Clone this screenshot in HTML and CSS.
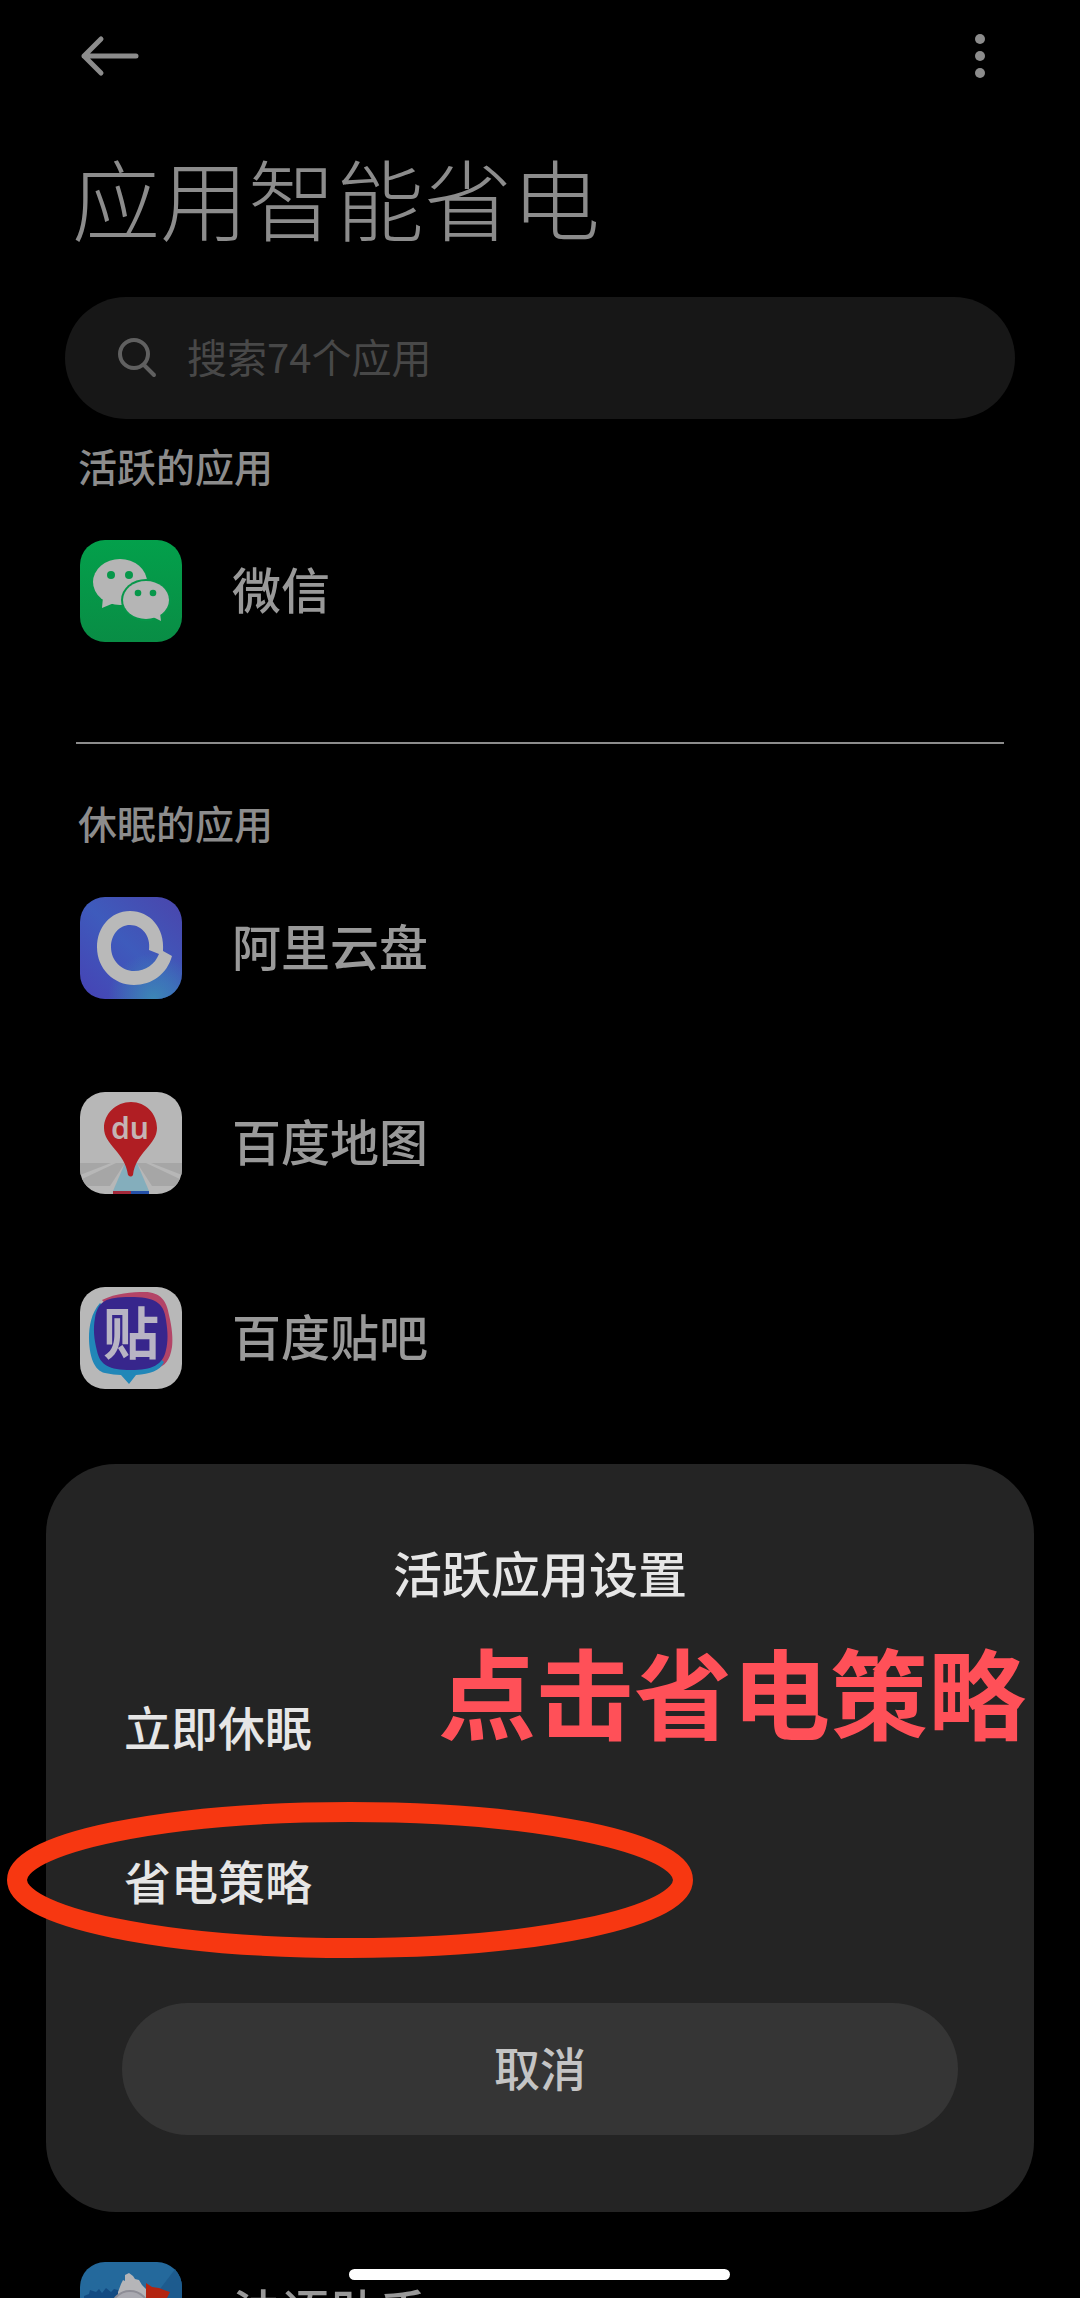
FILE: index.html
```
<!DOCTYPE html>
<html lang="zh-CN">

<head>
    <meta charset="UTF-8">
    <meta name="viewport" content="width=device-width, initial-scale=1.0">
    <title>应用智能省电</title>
    <link rel="stylesheet" href="styles.css">
</head>

<body>

    <header class="topbar">
        <button class="icon-button" aria-label="返回">
            <svg width="60" height="44" viewBox="0 0 60 44" fill="none" stroke="#8c8c8c" stroke-width="5" stroke-linecap="round" stroke-linejoin="round">
                <path d="M22 5L5 22l17 17M5 22h52" />
            </svg>
        </button>
        <button class="icon-button" aria-label="更多">
            <svg width="12" height="44" viewBox="0 0 12 44" fill="#8c8c8c">
                <circle cx="6" cy="5" r="5" />
                <circle cx="6" cy="22" r="5" />
                <circle cx="6" cy="39" r="5" />
            </svg>
        </button>
    </header>

    <main>
        <h1>应用智能省电</h1>

        <label class="search">
            <svg width="42" height="42" viewBox="0 0 42 42" fill="none" stroke="#606060" stroke-width="4" stroke-linecap="round">
                <circle cx="17" cy="17" r="14" />
                <path d="M27 28l10 10" />
            </svg>
            <input type="text" placeholder="搜索74个应用" aria-label="搜索应用">
        </label>

        <section>
            <h2>活跃的应用</h2>
            <ul class="app-list">
                <li class="app">
                    <svg class="app-icon" viewBox="0 0 102 102">
                        <defs>
                            <linearGradient id="wechat" x1="0" y1="0" x2="0" y2="1">
                                <stop offset="0" stop-color="#03a04b" />
                                <stop offset="1" stop-color="#098d45" />
                            </linearGradient>
                        </defs>
                        <rect width="102" height="102" rx="25" fill="url(#wechat)" />
                        <g fill="#b5b5b5">
                            <ellipse cx="40" cy="42" rx="27" ry="23" />
                            <path d="M23 57l-1 11 12-5z" />
                        </g>
                        <ellipse cx="66" cy="60" rx="25" ry="21" fill="#07974a" />
                        <g fill="#b5b5b5">
                            <ellipse cx="66" cy="60" rx="23" ry="19" />
                            <path d="M73 77l8 4-1-8z" />
                        </g>
                        <g fill="#07974a">
                            <circle cx="31" cy="35" r="4" />
                            <circle cx="49" cy="35" r="4" />
                            <circle cx="58" cy="53" r="3.3" />
                            <circle cx="73" cy="53" r="3.3" />
                        </g>
                    </svg>
                    <span>微信</span>
                </li>
            </ul>
        </section>

        <hr>

        <section>
            <h2>休眠的应用</h2>
            <ul class="app-list">
                <li class="app">
                    <svg class="app-icon" viewBox="0 0 102 102">
                        <defs>
                            <linearGradient id="drive" x1="0" y1="1" x2="1" y2="0">
                                <stop offset="0" stop-color="#4642b4" />
                                <stop offset=".5" stop-color="#3e5bbc" />
                                <stop offset="1" stop-color="#4a45ac" />
                            </linearGradient>
                            <radialGradient id="drive-glow" cx=".72" cy="1" r=".45">
                                <stop offset="0" stop-color="#3c87b6" />
                                <stop offset="1" stop-color="#3c87b6" stop-opacity="0" />
                            </radialGradient>
                        </defs>
                        <rect width="102" height="102" rx="25" fill="url(#drive)" />
                        <rect width="102" height="102" rx="25" fill="url(#drive-glow)" />
                        <path fill="#b9b9b9" fill-rule="evenodd" d="M83 54C85 31 70 14 50 14C30 14 17 31 17 50C17 72 34 88 54 88C72 88 87 77 92 59ZM69 53C71 39 62 28 50 28C39 28 31 38 31 50C31 64 42 74 54 74C66 74 75 67 79 57Z" />
                    </svg>
                    <span>阿里云盘</span>
                </li>
                <li class="app">
                    <svg class="app-icon" viewBox="0 0 102 102">
                        <defs>
                            <clipPath id="tile">
                                <rect width="102" height="102" rx="25" />
                            </clipPath>
                        </defs>
                        <g clip-path="url(#tile)">
                            <rect width="102" height="102" fill="#b7b7b7" />
                            <path fill="#a6a6a6" d="M0 71h31L0 83zM36 71h9L30 94H0v-6zM71 71h31v12zM57 71h9l36 17v6H72z" />
                            <path fill="#84aebc" d="M45 71h12l12 28H33z" />
                            <path fill="#a3283a" d="M33 99h18v3H33z" />
                            <path fill="#2450a8" d="M51 99h18v3H51z" />
                            <path fill="#b01e23" d="M51 10C66 10 77 22 77 36C77 53 56 60 53 83Q51 86 48 83C45 60 24 53 24 36C24 22 36 10 51 10Z" />
                        </g>
                        <text class="du" x="50" y="47">du</text>
                    </svg>
                    <span>百度地图</span>
                </li>
                <li class="app">
                    <svg class="app-icon" viewBox="0 0 102 102">
                        <rect width="102" height="102" rx="25" fill="#b8b8b8" />
                        <path fill="#b34467" d="M22 13C36 6 52 5 65 5C80 5 87 14 89 28C92 40 93 52 92 60C90 74 84 79 78 81Z" />
                        <path fill="#2187b8" d="M20 16C11 26 9 40 9 51C9 68 14 84 25 86Q34 88 41 88L49 97L56 88C70 87 80 84 84 75Z" />
                        <path fill="#37268c" d="M50 10C74 10 84 15 86 33C88 46 88 54 86 63C83 78 72 83 51 83C29 83 20 78 17 64C14 52 13 42 15 31C18 14 26 10 50 10Z" />
                        <text class="tie" x="51" y="67">贴</text>
                    </svg>
                    <span>百度贴吧</span>
                </li>
                <li class="app app-last">
                    <svg class="app-icon" viewBox="0 0 102 102">
                        <g clip-path="url(#tile)">
                            <rect width="102" height="102" fill="#24699c" />
                            <path fill="#1d5b8e" d="M96 6L70 40v62h32V6z" />
                            <path fill="#124a82" d="M4 34l5-2 1-4 6 2 3-3 3 4 4-5 5 4 3-3 8 2v73H4z" />
                            <path fill="#b5b5b8" d="M38 102V30l3-8 2-4 2 1v-6l4-2 4 3 2 3 4 1 3 5 4 4v75z" />
                            <path fill="#b32410" d="M66 21l6 4 7 1 5 2 6 2-4 8-4 4-16 2z" />
                            <circle cx="50" cy="48" r="19" fill="#a9a9b0" stroke="#8d8d96" stroke-width="2" />
                        </g>
                    </svg>
                    <span>法语助手</span>
                </li>
            </ul>
        </section>
    </main>

    <div class="sheet" role="dialog" aria-labelledby="sheet-title">
        <h3 id="sheet-title">活跃应用设置</h3>
        <button class="option">立即休眠</button>
        <button class="option">省电策略
            <svg class="ring" viewBox="0 0 686 156" preserveAspectRatio="none">
                <ellipse cx="343" cy="78" rx="333" ry="68" fill="none" stroke="#f73711" stroke-width="20" />
            </svg>
        </button>
        <button class="cancel">取消</button>
        <strong class="note">点击省电策略</strong>
    </div>

    <div class="home-bar"></div>

</body>

</html>
```

FILE: styles.css
```
* {
    box-sizing: border-box;
}

body {
    font-family: "Noto Sans CJK SC", sans-serif;
    background-color: #000;
    color: #999;
    margin: 0;
    height: 100vh;
    overflow: hidden;
}

h1, h2, h3, ul {
    margin: 0;
    padding: 0;
}

button {
    font-family: inherit;
    border: none;
    padding: 0;
    background: none;
    cursor: pointer;
}

.topbar {
    display: flex;
    justify-content: space-between;
    align-items: center;
    height: 112px;
    padding: 0 94px 0 79px;
}

.icon-button {
    display: flex;
}

main {
    padding: 0 76px;
}

h1 {
    margin: 24px -4px 0;
    font-size: 88px;
    line-height: 120px;
    font-weight: 300;
    color: #8c8c8c;
}

.search {
    display: flex;
    align-items: center;
    gap: 28px;
    height: 122px;
    margin: 41px -11px 0;
    padding: 0 52px;
    border-radius: 61px;
    background-color: #171717;
}

.search input {
    flex: 1;
    min-width: 0;
    border: none;
    outline: none;
    padding: 0 0 4px;
    background: none;
    color: #999;
    font-family: inherit;
    font-size: 40px;
}

.search input::placeholder {
    color: #484848;
}

h2 {
    margin-top: 18px;
    padding-left: 2px;
    font-size: 39px;
    line-height: 56px;
    font-weight: 500;
    color: #8c8c8c;
}

.app-list {
    list-style: none;
}

.app {
    display: flex;
    align-items: center;
    gap: 50px;
    height: 195px;
    padding-left: 4px;
    font-size: 49px;
    font-weight: 500;
}

.app span {
    padding-bottom: 6px;
}

.app-icon {
    width: 102px;
    height: 102px;
    flex-shrink: 0;
}

/* the rows in between are covered by the sheet */
.app-last {
    margin-top: 780px;
}

hr {
    height: 2px;
    margin: 54px 0 50px;
    border: none;
    background-color: #8c8c8c;
}

hr + section h2 {
    margin-top: 0;
}

.du {
    font: 600 30px "Noto Sans", sans-serif;
    fill: #c4b4b4;
    text-anchor: middle;
}

.tie {
    font-size: 56px;
    font-weight: 700;
    fill: #b8b4c4;
    text-anchor: middle;
}

.sheet {
    position: fixed;
    left: 46px;
    right: 46px;
    bottom: 86px;
    display: flex;
    flex-direction: column;
    padding: 72px 76px 77px;
    border-radius: 70px;
    background-color: #242424;
    color: #e6e6e6;
}

h3 {
    margin-bottom: 40px;
    font-size: 49px;
    line-height: 72px;
    font-weight: 500;
    text-align: center;
}

.option {
    position: relative;
    height: 154px;
    padding-left: 2px;
    font-size: 47px;
    font-weight: 500;
    text-align: left;
    color: #e6e6e6;
}

.cancel {
    height: 132px;
    margin-top: 47px;
    padding-bottom: 6px;
    border-radius: 66px;
    background-color: #353535;
    font-size: 46px;
    font-weight: 500;
    color: #c4c4c4;
}

/* hand-drawn marks over the sheet */
.note {
    position: absolute;
    top: 157px;
    right: 8px;
    font-size: 98px;
    line-height: 136px;
    font-weight: 700;
    color: #ff5058;
}

.ring {
    position: absolute;
    left: -115px;
    top: 0;
    width: 686px;
    height: 156px;
}

.home-bar {
    position: fixed;
    bottom: 18px;
    left: 50%;
    width: 381px;
    height: 11px;
    margin-left: -191px;
    border-radius: 6px;
    background-color: #fff;
}
```
